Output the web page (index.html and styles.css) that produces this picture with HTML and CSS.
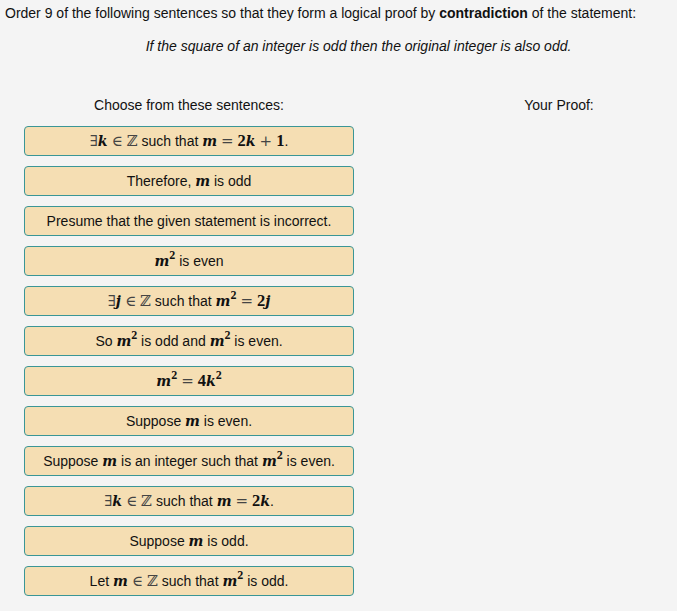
FILE: index.html
```html
<!DOCTYPE html>
<html>
<head>
<meta charset="utf-8">
<link rel="stylesheet" href="styles.css">
</head>
<body>
<div class="page">
  <p class="intro">Order 9 of the following sentences so that they form a logical proof by <b>contradiction</b> of the statement:</p>
  <p class="statement">If the square of an integer is odd then the original integer is also odd.</p>
  <div class="columns">
    <div class="col">
      <div class="col-title">Choose from these sentences:</div>
      <div class="list">
        <div class="card"><span class="m"><span class="s">∃</span><i>k</i><span class="s op">∈</span><span class="s">ℤ</span></span> such that <span class="m"><i>m</i><span class="s op">=</span><b>2</b><i>k</i><span class="s op">+</span><b>1</b></span>.</div>
        <div class="card">Therefore, <span class="m"><i>m</i></span> is odd</div>
        <div class="card">Presume that the given statement is incorrect.</div>
        <div class="card"><span class="m"><i>m</i><sup>2</sup></span> is even</div>
        <div class="card"><span class="m"><span class="s">∃</span><i>j</i><span class="s op">∈</span><span class="s">ℤ</span></span> such that <span class="m"><i>m</i><sup>2</sup><span class="s op">=</span><b>2</b><i>j</i></span></div>
        <div class="card">So <span class="m"><i>m</i><sup>2</sup></span> is odd and <span class="m"><i>m</i><sup>2</sup></span> is even.</div>
        <div class="card"><span class="m"><i>m</i><sup>2</sup><span class="s op">=</span><b>4</b><i>k</i><sup>2</sup></span></div>
        <div class="card">Suppose <span class="m"><i>m</i></span> is even.</div>
        <div class="card">Suppose <span class="m"><i>m</i></span> is an integer such that <span class="m"><i>m</i><sup>2</sup></span> is even.</div>
        <div class="card"><span class="m"><span class="s">∃</span><i>k</i><span class="s op">∈</span><span class="s">ℤ</span></span> such that <span class="m"><i>m</i><span class="s op">=</span><b>2</b><i>k</i></span>.</div>
        <div class="card">Suppose <span class="m"><i>m</i></span> is odd.</div>
        <div class="card">Let <span class="m"><i>m</i><span class="s op">∈</span><span class="s">ℤ</span></span> such that <span class="m"><i>m</i><sup>2</sup></span> is odd.</div>
      </div>
    </div>
    <div class="col">
      <div class="col-title">Your Proof:</div>
    </div>
  </div>
</div>
</body>
</html>
```
FILE: styles.css
```css
html, body {
  margin: 0;
  padding: 0;
  overflow: hidden;
  background: #f4f4f4;
}
body {
  font-family: "Liberation Sans", Arial, sans-serif;
  font-size: 14px;
  color: #111;
}
.page {
  width: 677px;
  padding: 4px 0 0 0;
}
.intro {
  margin: 0 0 0 5px;
  line-height: 18px;
}
.statement {
  margin: 15px 0 0 0;
  padding-left: 40px;
  text-align: center;
  font-style: italic;
  line-height: 18px;
}
.columns {
  display: grid;
  grid-template-columns: 330px 330px;
  column-gap: 40px;
  padding-left: 24px;
  margin-top: 41px;
  overflow: hidden;
}
.col-title {
  text-align: center;
  line-height: 18px;
  height: 18px;
}
.list {
  margin-top: 12px;
  display: flex;
  flex-direction: column;
  gap: 10px;
}
.card {
  box-sizing: border-box;
  height: 30px;
  background: #f5deb3;
  border: 1px solid #3a9696;
  border-radius: 4px;
  display: flex;
  align-items: center;
  justify-content: center;
  white-space: pre;
}
.m {
  font-family: "DejaVu Serif", "Liberation Serif", serif;
  font-size: 14px;
  line-height: 1;
}
.m i {
  font-weight: bold;
  font-style: italic;
}
.m b {
  font-weight: bold;
  font-family: "Liberation Serif", serif;
  font-size: 16.5px;
}
.m .s {
  font-family: "DejaVu Serif", serif;
  font-weight: normal;
  color: #444;
  font-size: 15px;
}
.m .op {
  margin: 0 4px;
}
.m sup {
  font-family: "Liberation Serif", serif;
  font-weight: bold;
  font-size: 12px;
  vertical-align: 7px;
  line-height: 0;
}
```
